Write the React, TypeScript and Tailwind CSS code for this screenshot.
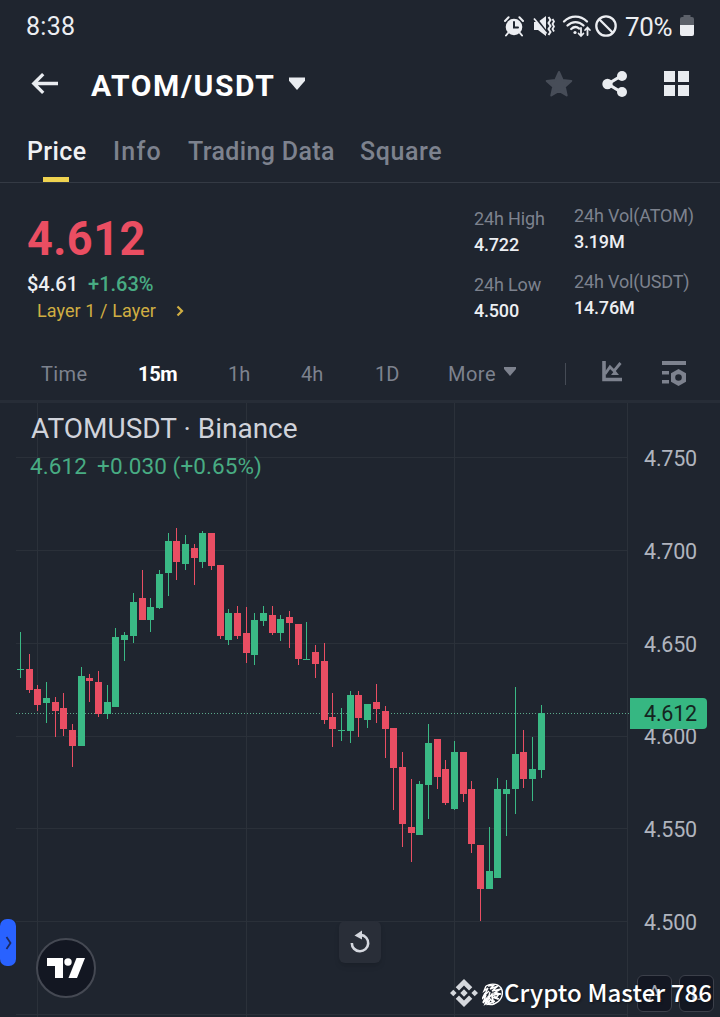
import React from 'react';

type Candle = [x: number, high: number, low: number, top: number, bottom: number, up: 0 | 1];

// x, wick top, wick bottom, body top, body bottom, direction
const candles: Candle[] = [
  [17, 632, 678, 669, 670, 1],
  [26, 654, 693, 669, 690, 0],
  [34, 685, 711, 689, 705, 0],
  [43, 682, 723, 698, 703, 1],
  [52, 697, 737, 702, 711, 0],
  [60, 693, 736, 708, 729, 0],
  [69, 724, 767, 730, 746, 0],
  [78, 667, 746, 676, 746, 1],
  [86, 674, 702, 678, 681, 0],
  [95, 671, 717, 682, 714, 0],
  [104, 685, 719, 702, 714, 1],
  [112, 628, 707, 637, 707, 1],
  [121, 632, 661, 635, 640, 1],
  [130, 593, 643, 602, 636, 1],
  [139, 570, 620, 598, 620, 0],
  [147, 598, 632, 607, 620, 1],
  [156, 570, 609, 574, 608, 1],
  [165, 533, 596, 541, 573, 1],
  [173, 528, 580, 541, 562, 0],
  [182, 535, 570, 544, 564, 1],
  [191, 544, 585, 548, 558, 0],
  [199, 531, 568, 533, 562, 1],
  [208, 533, 570, 533, 566, 0],
  [217, 565, 639, 565, 636, 0],
  [225, 609, 645, 613, 640, 1],
  [234, 606, 639, 613, 636, 0],
  [243, 607, 663, 633, 653, 0],
  [251, 613, 665, 620, 655, 1],
  [260, 606, 626, 613, 621, 1],
  [269, 606, 635, 615, 633, 0],
  [277, 615, 641, 619, 633, 1],
  [286, 611, 648, 617, 623, 0],
  [295, 624, 665, 624, 659, 0],
  [303, 622, 660, 659, 660, 1],
  [312, 645, 678, 652, 664, 0],
  [321, 643, 724, 661, 720, 0],
  [329, 693, 747, 717, 729, 0],
  [338, 708, 741, 730, 731, 1],
  [347, 691, 743, 695, 731, 1],
  [355, 691, 737, 695, 718, 0],
  [364, 704, 728, 704, 720, 1],
  [373, 684, 723, 702, 709, 0],
  [382, 706, 758, 711, 729, 0],
  [390, 728, 810, 728, 768, 0],
  [399, 752, 847, 767, 824, 0],
  [408, 779, 862, 827, 833, 0],
  [416, 781, 835, 784, 835, 1],
  [425, 724, 819, 743, 785, 1],
  [434, 739, 789, 739, 777, 0],
  [442, 760, 805, 769, 803, 0],
  [451, 741, 810, 752, 809, 1],
  [460, 752, 802, 752, 794, 0],
  [468, 781, 853, 789, 844, 0],
  [477, 845, 921, 845, 889, 0],
  [486, 827, 889, 871, 889, 1],
  [494, 778, 878, 789, 878, 1],
  [503, 780, 836, 789, 794, 1],
  [512, 687, 814, 754, 789, 1],
  [520, 730, 788, 752, 779, 0],
  [529, 737, 801, 769, 779, 1],
  [538, 705, 778, 713, 770, 1],
];

const gridRows = [457, 550, 643, 736, 828, 921, 1014];
const gridCols = [37, 246, 454, 627];
const prices = ['4.750', '4.700', '4.650', '4.600', '4.550', '4.500'];

const StatusBar = () => (
  <div className="flex h-[52px] items-center justify-between pl-[26px] pr-[27px] text-[#eceef2]">
    <span className="pt-0.5 text-[25px] tracking-[0.300px]">8:38</span>
    <div className="flex items-center">
      <svg width="22" height="22" viewBox="0 0 22 22" fill="none" stroke="currentColor" strokeLinecap="round">
        <circle cx="11" cy="12" r="8.3" fill="currentColor" stroke="none" />
        <path d="M2 6 5.6 2.3M20 6l-3.6-3.7" strokeWidth="2" />
        <path d="m5 18-2 2.5M17 18l2 2.5" strokeWidth="2" />
        <path d="M11 7v5.5h4" stroke="#1f252f" strokeWidth="2" />
      </svg>
      <svg className="ml-2" width="22" height="22" viewBox="0 0 22 22" fill="none" stroke="currentColor">
        <path d="M1 7h4l8-6v20l-8-6H1z" fill="currentColor" stroke="none" />
        <path d="m1 1 13 17" stroke="#1f252f" strokeWidth="2.600" />
        <path d="m1 3.5 12.500 15" strokeWidth="1.800" />
        <path d="m15.500 2 2 3-2 3 2 3-2 3 2 3-2 3" strokeWidth="2" />
        <path d="m19.500 4 1.500 2.500-1.500 2.500 1.500 2.500-1.500 2.500 1.500 2.500" strokeWidth="1.800" />
      </svg>
      <svg className="ml-[7px]" width="30" height="24" viewBox="0 0 30 24" fill="none" stroke="currentColor" strokeLinecap="round">
        <path d="M2 7.500C8.500 0.900 18.500 0.900 25 7.500" strokeWidth="2.300" />
        <path d="M5.500 11.500c4.600-4.600 11.400-4.600 16 0" strokeWidth="2.300" />
        <path d="M9.200 15c2.600-2.500 5.600-2.500 8 -0.400" strokeWidth="2.300" />
        <circle cx="13" cy="18.500" r="1.600" fill="currentColor" stroke="none" />
        <path d="M19 14v8m-2.400-2.500L19 22l2.400-2.500M25.500 21v-7.500m-2.400 2.500 2.400-2.500 2.400 2.500" strokeWidth="1.800" />
      </svg>
      <svg className="ml-0.5" width="24" height="24" viewBox="0 0 24 24" fill="none" stroke="currentColor" strokeWidth="2.300">
        <circle cx="12" cy="12" r="9.700" />
        <path d="m5 5 14 14" />
      </svg>
      <span className="ml-[7px] w-[52px] whitespace-nowrap pt-0.5 text-[26px] tracking-[-0.300px]">70%</span>
      <svg width="16" height="24" viewBox="0 0 16 24" className="ml-0.5 -mr-0.5">
        <path d="M4.500 1h7v2H13a2 2 0 0 1 2 2v8H1V5a2 2 0 0 1 2-2h1.500z" fill="#5c616a" />
        <path d="M1 11h14v9a2 2 0 0 1-2 2H3a2 2 0 0 1-2-2z" fill="#eceef2" />
      </svg>
    </div>
  </div>
);

const Header = () => (
  <div className="flex h-16 items-center pl-[31px] pr-[31px] text-[#e9ecf0]">
    <svg width="28" height="24" viewBox="0 0 28 24" fill="none" stroke="currentColor" strokeWidth="3.300">
      <path d="M27 11.500H3M12.200 2.200 2.800 11.500l9.400 9.300" />
    </svg>
    <h1 className="ml-8 w-[184px] whitespace-nowrap pt-0.5 text-[30px] font-bold tracking-[1.600px] text-white">ATOM/USDT</h1>
    <svg className="ml-[13px]" width="18" height="14" viewBox="0 0 18 14">
      <path d="M1 .5h16v3.200L9 13 1 3.700z" fill="currentColor" />
    </svg>
    <div className="ml-auto flex items-center">
      <svg width="28" height="28" viewBox="0 0 28 28">
        <path d="m14 2 3.600 8 8.700.900-6.500 5.900 1.900 8.600L14 21l-7.700 4.400 1.900-8.600L1.700 10.900l8.700-.900z" fill="#474d58" stroke="#474d58" strokeWidth="2" strokeLinejoin="round" />
      </svg>
      <svg className="ml-7" width="28" height="28" viewBox="0 0 28 28" fill="currentColor">
        <path d="M20 6 7 14l13 8" fill="none" stroke="currentColor" strokeWidth="3.200" />
        <circle cx="21" cy="6" r="5" />
        <circle cx="6.500" cy="14" r="5.200" />
        <circle cx="21" cy="22" r="5" />
      </svg>
      <div className="-mt-0.5 ml-[35px] grid grid-cols-2 gap-[3px]">
        <i className="size-[11px] bg-[#e9ecf0]" />
        <i className="size-[11px] bg-[#e9ecf0]" />
        <i className="size-[11px] bg-[#e9ecf0]" />
        <i className="size-[11px] bg-[#e9ecf0]" />
      </div>
    </div>
  </div>
);

const Tabs = () => (
  <nav className="flex h-[67px] items-stretch border-b border-[#343a44] pl-[27px] text-[25px] font-medium leading-[71px] text-[#7d828e]">
    <div className="flex w-[86px] flex-col">
      <span className="h-[61px] whitespace-nowrap tracking-[0.400px] text-[#f0f1f4]">Price</span>
      <span className="ml-4 h-[5px] w-[26px] bg-[#efd350]" />
    </div>
    <span className="w-[75px] whitespace-nowrap tracking-[1.200px]">Info</span>
    <span className="w-[172px] whitespace-nowrap tracking-[0.350px]">Trading Data</span>
    <span className="whitespace-nowrap tracking-[0.600px]">Square</span>
  </nav>
);

type StatProps = { label: string; value: string };

const Stat = ({ label, value }: StatProps) => (
  <div className="h-[66px] whitespace-nowrap">
    <p className="text-lg leading-[26px] tracking-[-0.150px] text-[#7d828e]">{label}</p>
    <p className="text-lg font-medium leading-[26px] tracking-[-0.200px] text-[#eceef2]">{value}</p>
  </div>
);

const Summary = () => (
  <section className="flex h-[164px] pl-[27px]">
    <div className="w-[447px] pt-[29px]">
      <p className="w-32 origin-left scale-x-[0.920] text-[49px] font-bold leading-[54px] tracking-[0.500px] text-[#ea4e62]">4.612</p>
      <div className="mt-[5px] flex gap-2.5 text-xl font-medium leading-[26px]">
        <span className="text-[#eceef2]">$4.61</span>
        <span className="text-[#48ac83]">+1.63%</span>
      </div>
      <div className="ml-2.5 mt-px flex items-center text-lg leading-[26px] text-[#d0ae42]">
        <span className="tracking-[0.080px]">Layer 1 / Layer</span>
        <svg className="ml-5" width="8" height="12" viewBox="0 0 8 12" fill="none" stroke="currentColor" strokeWidth="2.200">
          <path d="m1.500 1.500 4.500 4.500-4.500 4.500" />
        </svg>
      </div>
    </div>
    <div className="w-[100px] pt-[23px]">
      <Stat label="24h High" value="4.722" />
      <Stat label="24h Low" value="4.500" />
    </div>
    <div className="pt-5">
      <Stat label="24h Vol(ATOM)" value="3.19M" />
      <Stat label="24h Vol(USDT)" value="14.76M" />
    </div>
  </section>
);

const Intervals = () => (
  <div className="flex h-[56px] items-center whitespace-nowrap border-b-[3px] border-[#272d37] pl-[41px] text-xl text-[#7d828e]">
    <span className="w-[97px] tracking-[0.400px]">Time</span>
    <span className="w-[90px] font-bold tracking-[-0.300px] text-white">15m</span>
    <span className="w-[73px]">1h</span>
    <span className="w-[74px]">4h</span>
    <span className="w-[73px]">1D</span>
    <span className="w-14 tracking-[0.500px]">More</span>
    <svg className="-mt-1" width="12" height="10" viewBox="0 0 12 10">
      <path d="M0 0h12v2L6 9 0 2z" fill="currentColor" />
    </svg>
    <i className="ml-[49px] h-[22px] w-px bg-[#454b55]" />
    <svg className="-mt-1 ml-9" width="21" height="21" viewBox="0 0 21 21" fill="none" stroke="currentColor">
      <path d="M2 0v18.500h18" strokeWidth="3.600" />
      <path d="M3 13 8 6l4 4 6.500-8" strokeWidth="2.800" />
      <path d="m9 14 4-5 4 5z" fill="currentColor" stroke="none" />
    </svg>
    <svg className="-mt-0.5 ml-[38px]" width="26" height="26" viewBox="0 0 26 26" fill="currentColor">
      <path d="M1 1h24v4H1zM1 11h7v3.500H1zM1 20h7v3.500H1z" />
      <path fillRule="evenodd" d="M17.500 9 25 13.200v8.600L17.500 26 10 21.800v-8.600zm0 5.200a3.300 3.300 0 1 0 0 6.600 3.300 3.300 0 0 0 0-6.600z" />
    </svg>
  </div>
);

const CandleChart = () => (
  <svg className="shrink-0" width="630" height="614" viewBox="0 403 630 614" shapeRendering="crispEdges">
    {gridRows.map((y) => (
      <rect key={y} x="16" y={y} width="612" height="1" fill="#2a3039" />
    ))}
    {gridCols.map((x) => (
      <rect key={x} x={x} y="403" width="1" height="614" fill="#2b313a" />
    ))}
    <path d="M16 713.500h614" stroke="#5ba98b" strokeDasharray="1 2" />
    {candles.map(([x, high, low, top, bottom, up]) => (
      <g key={x} fill={up ? '#3ab985' : '#e94e63'}>
        <rect x={x + 3} y={high} width="1" height={low - high} />
        <rect x={x} y={top} width="7" height={bottom - top} />
      </g>
    ))}
  </svg>
);

const TradingViewLogo = () => (
  <div className="absolute left-9 top-[535px] flex size-[60px] items-center justify-center rounded-full border-2 border-[#454953] bg-[#131722]">
    <svg width="38" height="20" viewBox="0 0 38 20" fill="#fff">
      <path d="M0 0h16v20H8V8H0z" />
      <circle cx="21" cy="4" r="3.700" />
      <path d="M29.500 0H38l-8 20h-8.500z" />
    </svg>
  </div>
);

const Watermark = () => (
  <div className="absolute left-[450px] top-[574px] flex h-8 items-center">
    <svg width="28" height="28" viewBox="0 0 28 28" fill="#d5d8dd">
      <path d="m14 0 8.300 8.300-3.300 3.300-5-5-5 5-3.300-3.300zM14 28l-8.300-8.300L9 16.400l5 5 5-5 3.300 3.300z" />
      <path d="m3.300 10.700 3.300 3.300-3.300 3.300L0 14zM24.700 10.700 28 14l-3.300 3.300-3.300-3.300zM14 10.300l3.700 3.700-3.700 3.700-3.700-3.700z" />
    </svg>
    {/* scribbled coin */}
    <svg className="ml-1 mt-1" width="21" height="24" viewBox="0 0 21 24" fill="none" stroke="#fff" strokeWidth="1.400">
      <path d="M4 3C10-.500 18 1 20 7c1.500 6-2 12-8 14-3 1-6 .500-9-.500" />
      <path d="M4 3 2 8l4-3-4 8 5-5M6 3l6-1-4 4 8-3-6 5 9-2-7 4 7 1-8 1 5 4-6-2 1 5-4-4-3 6 1-6-4 5 3-8-4 4 3-6" />
      <path d="m1 19 4-4-2 6 5-4-2 4 7-3M13 9l4 2-3 4 3 1M8 9l-2 7 4-5 1 7" />
    </svg>
    <span className="-mt-0.5 w-[210px] whitespace-nowrap pl-px font-['Noto_Sans_CJK_SC','Noto_Sans',sans-serif] text-[24px] font-medium leading-8 tracking-[0.100px] text-white [text-shadow:1px_1px_2px_#11151c]">Crypto Master 786</span>
  </div>
);

const Chart = () => (
  <section className="relative flex h-[614px]">
    <CandleChart />
    <div className="flex-1 pt-[9px] pl-3.5 text-[21.500px] tracking-[-0.200px] text-[#b0b4be]">
      {prices.map((price) => (
        <p key={price} className="h-[92.800px] leading-[93px]">{price}</p>
      ))}
    </div>
    <div className="absolute left-[30px] top-2 whitespace-nowrap">
      <h2 className="ml-px text-[28px] leading-[36px] text-[#d0d3db]">ATOMUSDT · Binance</h2>
      <p className="flex gap-2.5 text-[22.500px] leading-[38px] tracking-[0.100px] text-[#48ac83]">
        <span>4.612</span>
        <span>+0.030 (+0.65%)</span>
      </p>
    </div>
    <div className="absolute left-[630px] top-[295px] h-[31px] w-[77px] rounded-r-sm bg-[#36b782] pl-3.5 text-[21.500px] leading-[32px] tracking-[-0.200px] text-[#15251f]">4.612</div>
    <div className="absolute left-0 top-[516px] flex h-[47px] w-4 items-center justify-center rounded-[7px] bg-[#2962ff]">
      <svg width="7" height="14" viewBox="0 0 7 14" fill="none" stroke="#1c2b62" strokeWidth="1.800">
        <path d="m1.500 1 4 6-4 6" />
      </svg>
    </div>
    <TradingViewLogo />
    <button className="absolute left-[339px] top-[518px] flex size-[42px] items-center justify-center rounded-md bg-[#292e38] shadow-md">
      <svg width="22" height="24" viewBox="0 0 22 24" fill="none" stroke="#d5d8df" strokeWidth="2.600">
        <path d="M2.800 13a8.200 8.200 0 1 0 9-8.100" />
        <path d="M13 .5v9L5.500 5.500z" fill="#d5d8df" stroke="none" />
      </svg>
    </button>
    <div className="absolute left-[637px] top-[572px] flex gap-[7px] text-[21px] text-[#a2a6af]">
      <span className="flex h-[37px] w-[35px] items-center justify-center rounded-md border border-[#3c404a] bg-[#131722]">A</span>
      <span className="flex h-[37px] w-[35px] items-center justify-center rounded-md border border-[#3c404a] bg-[#131722]">L</span>
    </div>
    <Watermark />
  </section>
);

const App = () => {
  return (
    <main className="h-[1017px] w-[720px] overflow-hidden bg-[#1f252f] font-[Roboto,sans-serif]">
      <StatusBar />
      <Header />
      <Tabs />
      <Summary />
      <Intervals />
      <Chart />
    </main>
  );
};

export default App;
